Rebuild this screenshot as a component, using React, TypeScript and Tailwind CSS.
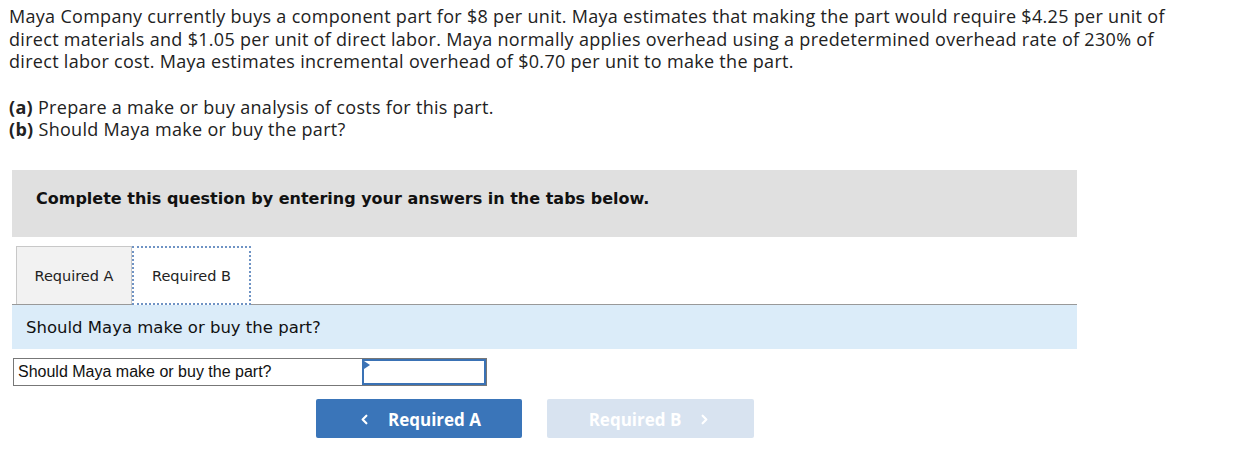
import { ChevronLeft, ChevronRight } from "lucide-react";

export default function App() {
  return (
    <div className="w-[1245px] h-[465px] bg-white text-[#222] relative">
      <div className="pl-[9px] pt-[5px] font-['Open_Sans',sans-serif] text-[18px] tracking-[0.3px] leading-[22.5px] whitespace-nowrap">
        <p>
          Maya Company currently buys a component part for $8 per unit. Maya estimates that making the part would require $4.25 per unit of
          <br />
          direct materials and $1.05 per unit of direct labor. Maya normally applies overhead using a predetermined overhead rate of 230% of
          <br />
          direct labor cost. Maya estimates incremental overhead of $0.70 per unit to make the part.
        </p>
        <p className="mt-[23px]">
          <b>(a)</b> Prepare a make or buy analysis of costs for this part.
        </p>
        <p>
          <b>(b)</b> Should Maya make or buy the part?
        </p>
      </div>

      <div className="ml-[12px] w-[1065px] mt-[29px] font-['DejaVu_Sans',Verdana,sans-serif]">
        <div className="h-[67px] bg-[#e0e0e0] flex items-center pl-[24px] pb-[9px]">
          <span className="font-bold text-[16px] text-[#111]">Complete this question by entering your answers in the tabs below.</span>
        </div>

        <div className="mt-[9px] flex items-end border-b border-[#999] h-[59px] pl-[4px]">
          <div className="h-[58px] w-[116px] bg-[#f2f2f2] border border-b-0 border-[#c8c8c8] flex items-center justify-center pt-[3px] text-[14.5px]">
            Required A
          </div>
          <div className="h-[59px] w-[119px] bg-white border-2 border-dotted border-[#6f93c4] -mb-px flex items-center justify-center pt-[3px] text-[14.5px]">
            Required B
          </div>
        </div>

        <div className="h-[44px] bg-[#dbecf9] flex items-center pl-[14px] pt-[4px] text-[16.5px] text-[#111]">
          Should Maya make or buy the part?
        </div>

        <div className="mt-[9px] ml-px w-[474px] h-[28px] border border-[#777] flex font-['Liberation_Sans',Arial,sans-serif] text-[16px]">
          <div className="w-[348px] flex items-center pl-[4px] text-[#111]">Should Maya make or buy the part?</div>
          <div className="relative flex-1 border-2 border-[#3a72b5] bg-white">
            <span className="absolute left-0 top-0 w-0 h-0 border-y-[4px] border-y-transparent border-l-[6px] border-l-[#3a72b5]" />
          </div>
        </div>
      </div>

      <div className="mt-[13px] ml-[316px] flex gap-[25px] font-['Open_Sans',sans-serif]">
        <button className="w-[206px] h-[39px] bg-[#3a75b9] rounded-[2px] text-white font-bold text-[17px] flex items-center justify-center gap-[16px] pt-[3px]">
          <ChevronLeft className="w-[15px] h-[15px]" strokeWidth={3.5} />
          <span>Required A</span>
        </button>
        <button className="w-[207px] h-[39px] bg-[#d8e3f0] rounded-[2px] text-white font-bold text-[17px] flex items-center justify-center gap-[16px] pt-[3px]">
          <span>Required B</span>
          <ChevronRight className="w-[15px] h-[15px]" strokeWidth={3.5} />
        </button>
      </div>
    </div>
  );
}
